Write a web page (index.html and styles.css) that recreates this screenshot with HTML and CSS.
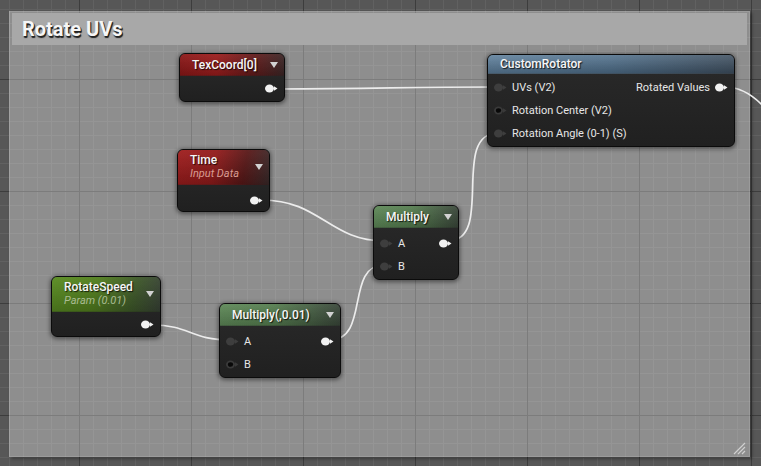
FILE: index.html
```html
<!DOCTYPE html>
<html>
<head>
<meta charset="utf-8">
<title>Rotate UVs</title>
<link rel="stylesheet" href="styles.css">
</head>
<body>
<div class="graph">
  <div class="comment">
    <div class="comment-head">Rotate UVs</div>
    <div class="comment-body">
      <svg class="resize" width="13" height="13" viewBox="0 0 13 13">
        <path d="M12 1 L1 12 M12 5 L5 12 M12 9 L9 12" />
      </svg>
    </div>
  </div>

  <svg class="wires" width="761" height="466" viewBox="0 0 761 466">
    <path d="M277 89 C 380 89, 400 87, 496 87" />
    <path d="M262 200 C 320 200, 330 241, 384 241" />
    <path d="M448 241 C 495 241, 450 133, 498 133" />
    <path d="M152 325 C 190 325, 190 340, 231 340" />
    <path d="M330 340 C 370 340, 345 265, 384 265" />
    <path d="M725 87 C 770 87, 790 150, 850 250" />
  </svg>

  <div class="node n-texcoord">
    <div class="head head-red">
      <span class="title">TexCoord[0]</span>
      <span class="caret"></span>
    </div>
    <div class="body body-single">
      <div class="row row-out">
        <svg class="pin pin-on" width="13" height="9" viewBox="0 0 13 9"><ellipse cx="4.5" cy="4.5" rx="4.5" ry="4"/><path d="M9 2.3 L12.5 4.5 L9 6.7 Z"/></svg>
      </div>
    </div>
  </div>

  <div class="node n-rotator">
    <div class="head head-blue">
      <span class="title">CustomRotator</span>
    </div>
    <div class="body body-rotator">
      <div class="row">
        <svg class="pin pin-linked" width="13" height="9" viewBox="0 0 13 9"><ellipse cx="4.5" cy="4.5" rx="4.5" ry="4"/><path d="M9 2.3 L12.5 4.5 L9 6.7 Z"/></svg>
        <span class="label">UVs (V2)</span>
        <span class="spacer"></span>
        <span class="label label-out">Rotated Values</span>
        <svg class="pin pin-on" width="13" height="9" viewBox="0 0 13 9"><ellipse cx="4.5" cy="4.5" rx="4.5" ry="4"/><path d="M9 2.3 L12.5 4.5 L9 6.7 Z"/></svg>
      </div>
      <div class="row">
        <svg class="pin pin-off" width="13" height="9" viewBox="0 0 13 9"><ellipse cx="4.5" cy="4.5" rx="4.5" ry="4"/><ellipse class="hole" cx="4.5" cy="4.5" rx="2.6" ry="2.3"/><path d="M9 2.3 L12.5 4.5 L9 6.7 Z"/></svg>
        <span class="label">Rotation Center (V2)</span>
      </div>
      <div class="row">
        <svg class="pin pin-linked" width="13" height="9" viewBox="0 0 13 9"><ellipse cx="4.5" cy="4.5" rx="4.5" ry="4"/><path d="M9 2.3 L12.5 4.5 L9 6.7 Z"/></svg>
        <span class="label">Rotation Angle (0-1) (S)</span>
      </div>
    </div>
  </div>

  <div class="node n-time">
    <div class="head head-red2 head-tall">
      <div class="titles">
        <span class="title">Time</span>
        <span class="subtitle sub-red">Input Data</span>
      </div>
      <span class="caret"></span>
    </div>
    <div class="body body-param">
      <div class="row row-out">
        <svg class="pin pin-on" width="13" height="9" viewBox="0 0 13 9"><ellipse cx="4.5" cy="4.5" rx="4.5" ry="4"/><path d="M9 2.3 L12.5 4.5 L9 6.7 Z"/></svg>
      </div>
    </div>
  </div>

  <div class="node n-mul1">
    <div class="head head-green">
      <span class="title">Multiply</span>
      <span class="caret"></span>
    </div>
    <div class="body body-mul">
      <div class="row">
        <svg class="pin pin-linked" width="13" height="9" viewBox="0 0 13 9"><ellipse cx="4.5" cy="4.5" rx="4.5" ry="4"/><path d="M9 2.3 L12.5 4.5 L9 6.7 Z"/></svg>
        <span class="label">A</span>
        <span class="spacer"></span>
        <svg class="pin pin-on" width="13" height="9" viewBox="0 0 13 9"><ellipse cx="4.5" cy="4.5" rx="4.5" ry="4"/><path d="M9 2.3 L12.5 4.5 L9 6.7 Z"/></svg>
      </div>
      <div class="row">
        <svg class="pin pin-linked" width="13" height="9" viewBox="0 0 13 9"><ellipse cx="4.5" cy="4.5" rx="4.5" ry="4"/><path d="M9 2.3 L12.5 4.5 L9 6.7 Z"/></svg>
        <span class="label">B</span>
      </div>
    </div>
  </div>

  <div class="node n-speed">
    <div class="head head-lime head-tall">
      <div class="titles">
        <span class="title">RotateSpeed</span>
        <span class="subtitle sub-green">Param (0.01)</span>
      </div>
      <span class="caret"></span>
    </div>
    <div class="body body-param2">
      <div class="row row-out">
        <svg class="pin pin-on" width="13" height="9" viewBox="0 0 13 9"><ellipse cx="4.5" cy="4.5" rx="4.5" ry="4"/><path d="M9 2.3 L12.5 4.5 L9 6.7 Z"/></svg>
      </div>
    </div>
  </div>

  <div class="node n-mul2">
    <div class="head head-green">
      <span class="title">Multiply(,0.01)</span>
      <span class="caret"></span>
    </div>
    <div class="body body-mul">
      <div class="row">
        <svg class="pin pin-linked" width="13" height="9" viewBox="0 0 13 9"><ellipse cx="4.5" cy="4.5" rx="4.5" ry="4"/><path d="M9 2.3 L12.5 4.5 L9 6.7 Z"/></svg>
        <span class="label">A</span>
        <span class="spacer"></span>
        <svg class="pin pin-on" width="13" height="9" viewBox="0 0 13 9"><ellipse cx="4.5" cy="4.5" rx="4.5" ry="4"/><path d="M9 2.3 L12.5 4.5 L9 6.7 Z"/></svg>
      </div>
      <div class="row">
        <svg class="pin pin-off" width="13" height="9" viewBox="0 0 13 9"><ellipse cx="4.5" cy="4.5" rx="4.5" ry="4"/><ellipse class="hole" cx="4.5" cy="4.5" rx="2.6" ry="2.3"/><path d="M9 2.3 L12.5 4.5 L9 6.7 Z"/></svg>
        <span class="label">B</span>
      </div>
    </div>
  </div>
</div>
</body>
</html>
```

FILE: styles.css
```css
* { box-sizing: border-box; }

html, body {
  margin: 0;
  padding: 0;
  width: 761px;
  height: 466px;
  overflow: hidden;
}

body {
  font-family: Roboto, "Liberation Sans", sans-serif;
  background-color: #575757;
  background-image:
    linear-gradient(#3d3d3d 1px, transparent 1px),
    linear-gradient(90deg, #3d3d3d 1px, transparent 1px),
    linear-gradient(#616161 1px, transparent 1px),
    linear-gradient(90deg, #616161 1px, transparent 1px);
  background-size: 112px 112px, 112px 112px, 14px 14px, 14px 14px;
  background-position: 79px 79px, 79px 79px, 9px 9px, 9px 9px;
}

.graph {
  position: relative;
  width: 761px;
  height: 466px;
}

/* comment box */
.comment {
  position: absolute;
  left: 9px;
  top: 11px;
  width: 741px;
  height: 446px;
  padding: 1px 2px 0;
  display: flex;
  flex-direction: column;
  background: rgba(255, 255, 255, 0.33);
  border: 1px solid rgba(255, 255, 255, 0.12);
  box-shadow: 2px 2px 3px rgba(0, 0, 0, 0.35);
}

.comment-head {
  height: 32px;
  flex: none;
  background: #a8a8a8;
  color: #f6f6f6;
  font-weight: bold;
  font-size: 20px;
  line-height: 32px;
  padding-left: 10px;
  text-shadow: 1px 2px 1px #222, 1px 1px 0 #333;
}

.comment-body {
  flex: 1;
  display: flex;
  justify-content: flex-end;
  align-items: flex-end;
  padding: 0 1px 1px 0;
}

.resize path {
  stroke: #d0d0d0;
  stroke-width: 1.2;
  fill: none;
}

/* wires */
.wires {
  position: absolute;
  left: 0;
  top: 0;
}

.wires path {
  fill: none;
  stroke: #ececec;
  stroke-width: 1.7;
}

/* nodes */
.node {
  position: absolute;
  display: flex;
  flex-direction: column;
  border: 1px solid #0b0b0b;
  border-radius: 6px;
  overflow: hidden;
  background: linear-gradient(#2a2a2a, #202020);
  box-shadow: 0 1px 4px 1px rgba(0, 0, 0, 0.45);
  color: #e8e8e8;
}

.n-texcoord { left: 179px; top: 53px; width: 106px; }
.n-rotator  { left: 487px; top: 54px; width: 248px; }
.n-time     { left: 177px; top: 149px; width: 93px; }
.n-mul1     { left: 373px; top: 205px; width: 86px; }
.n-speed    { left: 51px;  top: 276px; width: 110px; }
.n-mul2     { left: 219px; top: 303px; width: 122px; }

.head {
  display: flex;
  align-items: center;
  height: 22px;
  padding: 0 6px 0 12px;
  border-bottom: 1px solid rgba(0, 0, 0, 0.35);
}

.head-tall {
  height: 35px;
  align-items: center;
}

.titles {
  display: flex;
  flex-direction: column;
  flex: 1;
}

.title {
  flex: 1;
  font-size: 12px;
  font-weight: 500;
  line-height: 14px;
  color: #f6f6f6;
  text-shadow: 1px 1px 1px rgba(0, 0, 0, 0.8);
  white-space: nowrap;
}

.subtitle {
  font-size: 11px;
  font-style: italic;
  line-height: 14px;
  white-space: nowrap;
}

.sub-red { color: #d99c92; }
.sub-green { color: #a9bb92; }

.caret {
  flex: none;
  width: 0;
  height: 0;
  border-left: 4.5px solid transparent;
  border-right: 4.5px solid transparent;
  border-top: 6px solid #d2d2d2;
}

.head-red {
  background:
    linear-gradient(rgba(255,255,255,0.06), rgba(0,0,0,0.18)),
    linear-gradient(90deg, #8c1717 0%, #9b1c1c 35%, #641b1b 70%, #3c2626 100%);
}

.head-red2 {
  background:
    linear-gradient(rgba(255,255,255,0.05), rgba(0,0,0,0.2)),
    linear-gradient(100deg, #a01d1d 0%, #931b1b 40%, #5a1818 72%, #3a2a2a 100%);
}

.head-blue {
  height: 19px;
  background:
    linear-gradient(rgba(255,255,255,0.12), rgba(0,0,0,0.2)),
    linear-gradient(90deg, #5c7e9b 0%, #4f6f8b 50%, #3e4f60 100%);
}

.head-green {
  background:
    linear-gradient(rgba(255,255,255,0.06), rgba(0,0,0,0.18)),
    linear-gradient(90deg, #5e8958 0%, #557d4f 45%, #3a473a 100%);
}

.head-lime {
  background:
    linear-gradient(rgba(255,255,255,0.04), rgba(0,0,0,0.2)),
    linear-gradient(100deg, #5a8d22 0%, #53801f 40%, #3f5a2a 75%, #384236 100%);
}

.body {
  display: flex;
  flex-direction: column;
}

.body-single { height: 25px; justify-content: center; }
.body-param  { height: 26px; padding-top: 4px; justify-content: center; }
.body-param2 { height: 24px; justify-content: center; }
.body-rotator { padding: 2px 0 1px; }
.body-mul { padding: 3px 0 1px; }

.row {
  display: flex;
  align-items: center;
  height: 23px;
  padding: 0 6px;
}

.body-mul .row { height: 24px; }
.body-mul .row:last-child { height: 23px; }

.row-out {
  justify-content: flex-end;
  height: auto;
}

.label {
  font-size: 11px;
  color: #e6e6e6;
  margin-left: 5px;
  white-space: nowrap;
}

.label-out {
  margin-left: 0;
  margin-right: 5px;
}

.spacer { flex: 1; }

.pin { flex: none; display: block; }
.pin-on ellipse, .pin-on path { fill: #f2f2f2; }
.pin-linked ellipse, .pin-linked path { fill: #3e3e3e; }
.pin-off ellipse, .pin-off path { fill: #3a3a3a; }
.pin-off .hole { fill: #080808; }
```
